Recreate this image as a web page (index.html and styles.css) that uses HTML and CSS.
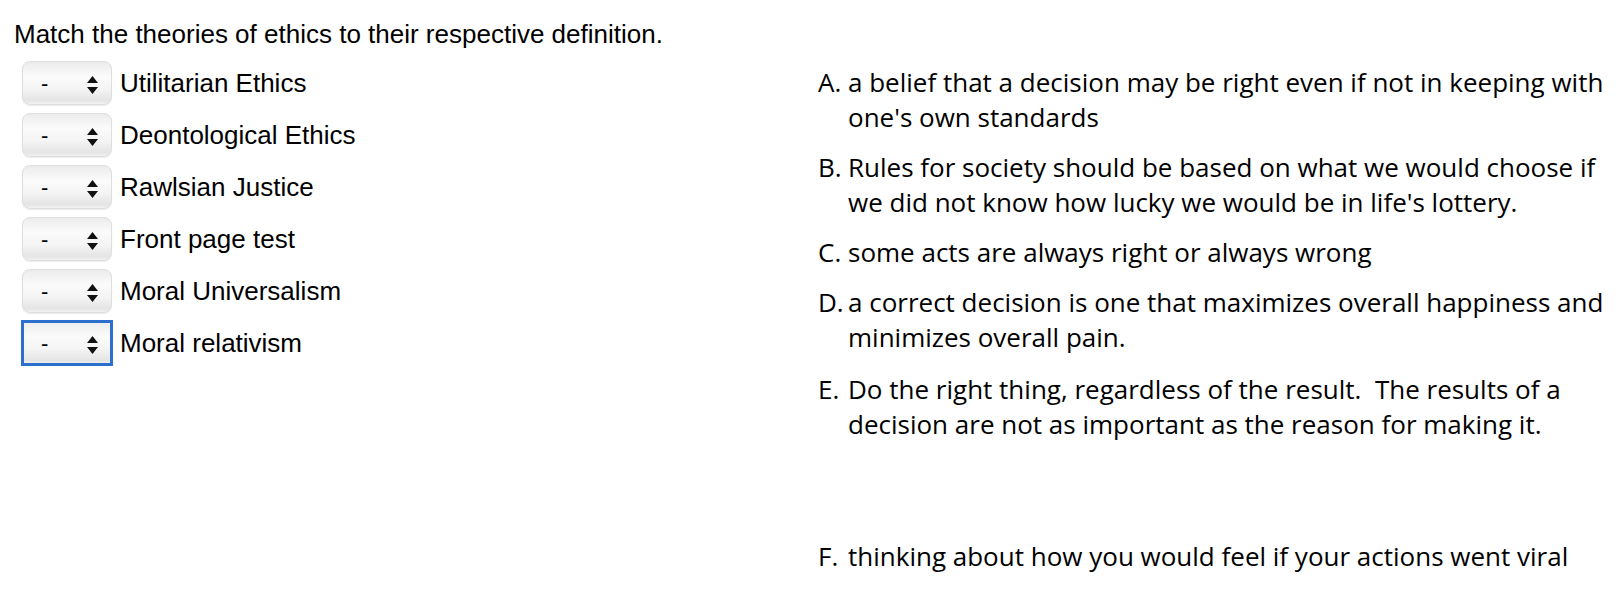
FILE: index.html
```html
<!DOCTYPE html>
<html lang="en">
<head>
<meta charset="UTF-8">
<title>Matching question</title>
<link rel="stylesheet" href="styles.css">
</head>
<body>
    <p class="question">Match the theories of ethics to their respective definition.</p>
    <div class="match">
        <div class="prompts">
            <div class="row">
                <div class="pick">
                    <select><option>-</option><option>A</option><option>B</option><option>C</option><option>D</option><option>E</option><option>F</option></select>
                    <svg class="arrows" width="11" height="18" viewBox="0 0 11 18"><path d="M5.5 0L11 7H0Z M0 11H11L5.5 18Z" fill="#111"/></svg>
                </div>
                <span class="term">Utilitarian Ethics</span>
            </div>
            <div class="row">
                <div class="pick">
                    <select><option>-</option><option>A</option><option>B</option><option>C</option><option>D</option><option>E</option><option>F</option></select>
                    <svg class="arrows" width="11" height="18" viewBox="0 0 11 18"><path d="M5.5 0L11 7H0Z M0 11H11L5.5 18Z" fill="#111"/></svg>
                </div>
                <span class="term">Deontological Ethics</span>
            </div>
            <div class="row">
                <div class="pick">
                    <select><option>-</option><option>A</option><option>B</option><option>C</option><option>D</option><option>E</option><option>F</option></select>
                    <svg class="arrows" width="11" height="18" viewBox="0 0 11 18"><path d="M5.5 0L11 7H0Z M0 11H11L5.5 18Z" fill="#111"/></svg>
                </div>
                <span class="term">Rawlsian Justice</span>
            </div>
            <div class="row">
                <div class="pick">
                    <select><option>-</option><option>A</option><option>B</option><option>C</option><option>D</option><option>E</option><option>F</option></select>
                    <svg class="arrows" width="11" height="18" viewBox="0 0 11 18"><path d="M5.5 0L11 7H0Z M0 11H11L5.5 18Z" fill="#111"/></svg>
                </div>
                <span class="term">Front page test</span>
            </div>
            <div class="row">
                <div class="pick">
                    <select><option>-</option><option>A</option><option>B</option><option>C</option><option>D</option><option>E</option><option>F</option></select>
                    <svg class="arrows" width="11" height="18" viewBox="0 0 11 18"><path d="M5.5 0L11 7H0Z M0 11H11L5.5 18Z" fill="#111"/></svg>
                </div>
                <span class="term">Moral Universalism</span>
            </div>
            <div class="row">
                <div class="pick focused">
                    <select><option>-</option><option>A</option><option>B</option><option>C</option><option>D</option><option>E</option><option>F</option></select>
                    <svg class="arrows" width="11" height="18" viewBox="0 0 11 18"><path d="M5.5 0L11 7H0Z M0 11H11L5.5 18Z" fill="#111"/></svg>
                </div>
                <span class="term">Moral relativism</span>
            </div>
        </div>
        <ol class="answers">
            <li><span class="letter">A.</span><span class="def">a belief that a decision may be right even if not in keeping with one's own standards</span></li>
            <li><span class="letter">B.</span><span class="def">Rules for society should be based on what we would choose if we did not know how lucky we would be in life's lottery.</span></li>
            <li><span class="letter">C.</span><span class="def">some acts are always right or always wrong</span></li>
            <li class="wide"><span class="letter">D.</span><span class="def">a correct decision is one that maximizes overall happiness and minimizes overall pain.</span></li>
            <li><span class="letter">E.</span><span class="def">Do the right thing, regardless of the result.&nbsp; The results of a decision are not as important as the reason for making it.</span></li>
            <li class="last"><span class="letter">F.</span><span class="def">thinking about how you would feel if your actions went viral</span></li>
        </ol>
    </div>
</body>
</html>
```

FILE: styles.css
```css
body {
    margin: 0;
    padding: 0 14px;
    background-color: #fff;
    color: #000;
    font-family: "Liberation Sans", Arial, sans-serif;
}

.question {
    margin: 0;
    padding-top: 19px;
    font-size: 26px;
    line-height: 30px;
}

.match {
    display: grid;
    grid-template-columns: 804px 800px;
    margin-top: 12px;
}

.prompts {
    display: flex;
    flex-direction: column;
    gap: 8px;
    padding-left: 8px;
}

.row {
    display: flex;
    align-items: center;
    gap: 8px;
    height: 44px;
}

.pick {
    position: relative;
    width: 90px;
    height: 44px;
    flex-shrink: 0;
}

.pick select {
    appearance: none;
    -webkit-appearance: none;
    width: 100%;
    height: 100%;
    margin: 0;
    padding: 0 0 0 18px;
    border: 1px solid #dedede;
    border-radius: 8px;
    background: linear-gradient(#ececec, #fbfbfb 35%, #f4f4f4 65%, #e4e4e4 92%, #f2f2f2);
    box-shadow: 0 1px 1px rgba(0, 0, 0, 0.08);
    font-family: "Liberation Sans", Arial, sans-serif;
    font-size: 22px;
    color: #000;
    outline: none;
}

.pick .arrows {
    position: absolute;
    right: 14px;
    top: 15px;
    pointer-events: none;
}

.pick.focused select {
    border-radius: 0;
    border-color: #2d6fcc;
    outline: 3px solid #2d6fcc;
    outline-offset: -2px;
    box-shadow: none;
}

.term {
    font-size: 26px;
    line-height: 30px;
}

.answers {
    list-style: none;
    margin: 0;
    padding: 4px 0 0;
    width: 798px;
    font-family: "Open Sans", sans-serif;
    font-size: 26px;
    line-height: 35px;
}

.answers li {
    display: flex;
    margin-bottom: 15px;
}

.answers li.wide {
    margin-bottom: 17px;
}

.answers li.last {
    margin-top: 97px;
}

.letter {
    width: 30px;
    flex-shrink: 0;
}

.def {
    width: 765px;
}
```
